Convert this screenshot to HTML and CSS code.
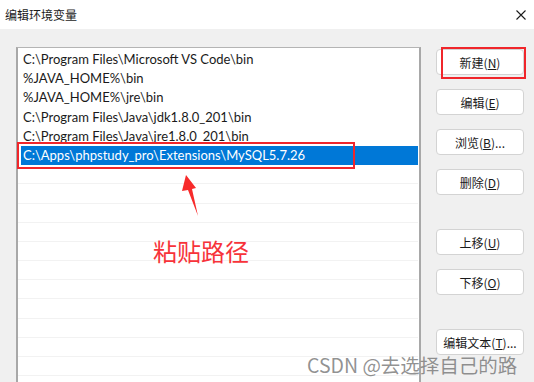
FILE: index.html
```html
<!DOCTYPE html>
<html lang="zh-CN">
<head>
  <meta charset="UTF-8" />
  <meta name="viewport" content="width=device-width, initial-scale=1.0" />
  <title>编辑环境变量</title>
  <link rel="stylesheet" href="styles.css">
</head>
<body>
  <div class="dialog">
    <div class="titlebar">
      <span class="judul">编辑环境变量</span>
      <svg class="tutup" viewBox="0 0 10 10"><path d="M0.5 0.5L9.5 9.5M9.5 0.5L0.5 9.5" stroke="#1a1a1a" stroke-width="1.1" fill="none"/></svg>
    </div>

    <div class="isi">
      <div class="daftar">
        <div class="baris">C:\Program Files\Microsoft VS Code\bin</div>
        <div class="baris">%JAVA_HOME%\bin</div>
        <div class="baris">%JAVA_HOME%\jre\bin</div>
        <div class="baris">C:\Program Files\Java\jdk1.8.0_201\bin</div>
        <div class="baris">C:\Program Files\Java\jre1.8.0_201\bin</div>
        <div class="baris dipilih">C:\Apps\phpstudy_pro\Extensions\MySQL5.7.26</div>
        <div class="baris kosong"></div>
        <div class="baris kosong"></div>
        <div class="baris kosong"></div>
        <div class="baris kosong"></div>
        <div class="baris kosong"></div>
        <div class="baris kosong"></div>
        <div class="baris kosong"></div>
        <div class="baris kosong"></div>
        <div class="baris kosong"></div>
        <div class="baris kosong"></div>
        <div class="baris kosong"></div>
        <div class="baris kosong"></div>
      </div>

      <div class="tombol-kolom">
        <button class="tombol">新建(<u>N</u>)</button>
        <button class="tombol">编辑(<u>E</u>)</button>
        <button class="tombol">浏览(<u>B</u>)...</button>
        <button class="tombol">删除(<u>D</u>)</button>
        <button class="tombol jauh">上移(<u>U</u>)</button>
        <button class="tombol">下移(<u>O</u>)</button>
        <button class="tombol jauh">编辑文本(<u>T</u>)...</button>
      </div>
    </div>
  </div>

  <!-- coretan merah di atas tangkapan layar -->
  <svg class="coretan" viewBox="0 0 534 382">
    <rect x="442" y="48" width="83" height="30" fill="none" stroke="#f0262b" stroke-width="2"/>
    <rect x="18" y="143" width="336" height="25" fill="none" stroke="#f0262b" stroke-width="2"/>
    <polygon points="186,175 196,188 192,189 198,216 188,190 182,191" fill="#f72a2a"/>
  </svg>
  <div class="label-merah">粘贴路径</div>
  <div class="watermark">CSDN @去选择自己的路</div>
</body>
</html>
```

FILE: styles.css
```css
body {
  margin: 0;
  padding: 0;
  width: 534px;
  height: 382px;
  overflow: hidden;
  background: #f0f0f0;
  font-family: 'Lato', 'Noto Sans CJK SC', sans-serif;
  position: relative;
}

.titlebar {
  height: 29px;
  background: #ffffff;
  display: flex;
  align-items: center;
  justify-content: space-between;
  padding: 0 8px 0 5px;
}

.judul {
  font-family: 'Noto Sans CJK SC', sans-serif;
  font-size: 12px;
  color: #1a1a1a;
}

.tutup {
  width: 10px;
  height: 10px;
}

.isi {
  display: flex;
  padding: 18px 0 0 16px;
  gap: 15px;
}

.daftar {
  width: 403px;
  height: 340px;
  background: #ffffff;
  border: 1px solid #b4b4b4;
  border-right: 2px solid #a8a8a8;
  border-left: 2px solid #a8a8a8;
  padding-top: 2px;
  box-sizing: border-box;
  width: 405px;
}

.baris {
  height: 19.2px;
  line-height: 19.2px;
  margin: 0 1px 0 3px;
  padding-left: 2px;
  font-size: 13px;
  color: #1a1a1a;
  white-space: nowrap;
  box-sizing: border-box;
}

.dipilih {
  background: #0078d7;
  color: #ffffff;
}

.kosong {
  border-bottom: 1px solid #f2f2f2;
  margin-left: 0;
}

.tombol-kolom {
  display: flex;
  flex-direction: column;
  gap: 14px;
  padding-top: 2px;
}

.tombol {
  width: 88px;
  height: 26px;
  background: #ffffff;
  border: 1px solid #d3d3d3;
  border-radius: 4px;
  font-family: 'Noto Sans CJK SC', sans-serif;
  font-size: 12px;
  color: #1a1a1a;
  padding: 0;
}

.tombol.jauh {
  margin-top: 20px;
}

.coretan {
  position: absolute;
  left: 0;
  top: 0;
  width: 534px;
  height: 382px;
  pointer-events: none;
}

.label-merah {
  position: absolute;
  left: 153px;
  top: 233px;
  font-family: 'Noto Sans CJK SC', sans-serif;
  font-size: 24px;
  color: #f7333a;
}

.watermark {
  position: absolute;
  left: 307px;
  top: 350px;
  font-family: 'Noto Sans CJK SC', sans-serif;
  font-size: 19.5px;
  color: rgba(110, 110, 110, 0.75);
}
```
